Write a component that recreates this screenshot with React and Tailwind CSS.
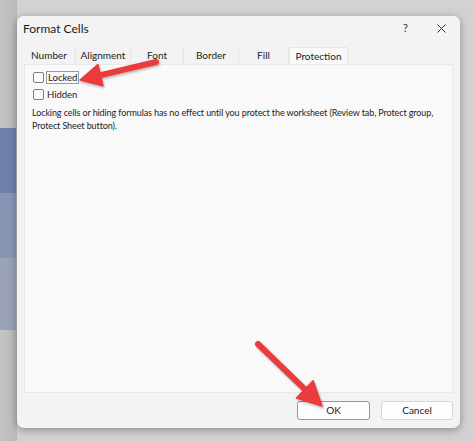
import React from "react";

const font = { fontFamily: 'Lato, "Noto Sans", "Open Sans", sans-serif' };

const tabs = ["Number", "Alignment", "Font", "Border", "Fill", "Protection"];

// red annotation arrow, tail -> tip
const Arrow = ({ x1, y1, x2, y2, head = 21, wing = 11 }) => {
  const dx = x2 - x1;
  const dy = y2 - y1;
  const len = Math.sqrt(dx * dx + dy * dy);
  const ux = dx / len;
  const uy = dy / len;
  const bx = x2 - ux * head;
  const by = y2 - uy * head;
  const px = -uy * wing;
  const py = ux * wing;
  return (
    <g filter="url(#shadow)">
      <line
        x1={x1}
        y1={y1}
        x2={bx + ux * 2}
        y2={by + uy * 2}
        stroke="#ea3a3c"
        strokeWidth="6"
        strokeLinecap="round"
      />
      <polygon
        points={`${x2},${y2} ${bx + px},${by + py} ${bx - px},${by - py}`}
        fill="#ea3a3c"
        stroke="#ea3a3c"
        strokeWidth="1.5"
        strokeLinejoin="round"
      />
    </g>
  );
};

const Checkbox = ({ label, focus }) => (
  <div className="flex items-center h-[17px]">
    <div className="w-[11px] h-[11px] rounded-[2px] border border-[#808080] bg-[#fbfbfb] ml-[8px]" />
    <span
      className={
        focus
          ? "ml-[2px] px-[1px] border border-[#9a9a9a] leading-[11px] text-[9.5px] text-[#222]"
          : "ml-[3px] leading-[11px] text-[9.5px] text-[#222]"
      }
    >
      {label}
    </span>
  </div>
);

export default function App() {
  return (
    <div
      className="relative w-[474px] h-[441px] overflow-hidden bg-[#d2d2d2] flex"
      style={font}
    >
      {/* desktop behind the dialog */}
      <div className="w-[17px] flex flex-col bg-gradient-to-r from-[#c4c4c4] to-[#b9b9b9]">
        <div className="h-[128px]" />
        <div className="h-[65px] w-[16px] bg-[#6f81ac]" />
        <div className="h-[65px] w-[16px] bg-[#8895b5]" />
        <div className="h-[72px] w-[16px] bg-[#9aa2b6]" />
      </div>

      {/* dialog */}
      <div className="mt-[16px] w-[443px] h-[412px] rounded-[7px] bg-[#f3f3f3] shadow-[0_2px_8px_rgba(0,0,0,0.35)] flex flex-col">
        <div className="h-[24px] flex items-center pl-[6px] pr-[14px] rounded-t-[7px] bg-[#f3f3f3]">
          <span className="text-[12px] text-[#1b1b1b] mt-[1px]">Format Cells</span>
          <span className="ml-auto text-[11px] text-[#333] mt-[1px]">?</span>
          <svg width="9" height="9" viewBox="0 0 9 9" className="ml-[29px] mt-[1px]">
            <path d="M0.5 0.5 L8.5 8.5 M8.5 0.5 L0.5 8.5" stroke="#333" strokeWidth="1" />
          </svg>
        </div>

        <div className="flex mt-[7px] ml-[6px] h-[17px] items-stretch">
          {tabs.map((t, i) => (
            <div
              key={t}
              className={
                t === "Protection"
                  ? "w-[59px] flex items-center justify-center text-[10px] text-[#222] bg-[#f9f9f9] border border-b-0 border-[#e6e6e6] rounded-t-[2px]"
                  : "flex items-center justify-center text-[10px] text-[#222] border-r border-[#e6e6e6] " +
                    ["w-[53px]", "w-[55px]", "w-[53px]", "w-[55px]", "w-[50px]"][i]
              }
            >
              {t}
            </div>
          ))}
        </div>

        <div className="ml-[7px] w-[429px] h-[329px] bg-[#f9f9f9] border border-[#e8e8e8] pt-[4px]">
          <Checkbox label="Locked" focus />
          <Checkbox label="Hidden" />
          <p className="mt-[3px] ml-[7px] text-[9px] tracking-[-0.1px] leading-[13px] text-[#222] whitespace-nowrap">
            Locking cells or hiding formulas has no effect until you protect the worksheet (Review
            tab, Protect group,
            <br />
            Protect Sheet button).
          </p>
        </div>

        <div className="flex justify-end gap-[11px] mt-[8px] pr-[7px]">
          <button className="w-[73px] h-[19px] rounded-[3px] bg-[#fdfdfd] border border-[#7a9bc4] text-[10px] text-[#222]">
            OK
          </button>
          <button className="w-[72px] h-[19px] rounded-[3px] bg-[#fdfdfd] border border-[#d6d6d6] text-[10px] text-[#222]">
            Cancel
          </button>
        </div>
      </div>

      {/* annotation arrows */}
      <svg className="absolute inset-0 pointer-events-none" width="474" height="441">
        <defs>
          <filter id="shadow" x="-20%" y="-20%" width="140%" height="140%">
            <feDropShadow dx="1" dy="1.5" stdDeviation="1.2" floodColor="#000" floodOpacity="0.3" />
          </filter>
        </defs>
        <Arrow x1={156} y1={62} x2={80} y2={80} />
        <Arrow x1={258} y1={344} x2={322} y2={406} head={24} wing={12} />
      </svg>
    </div>
  );
}
